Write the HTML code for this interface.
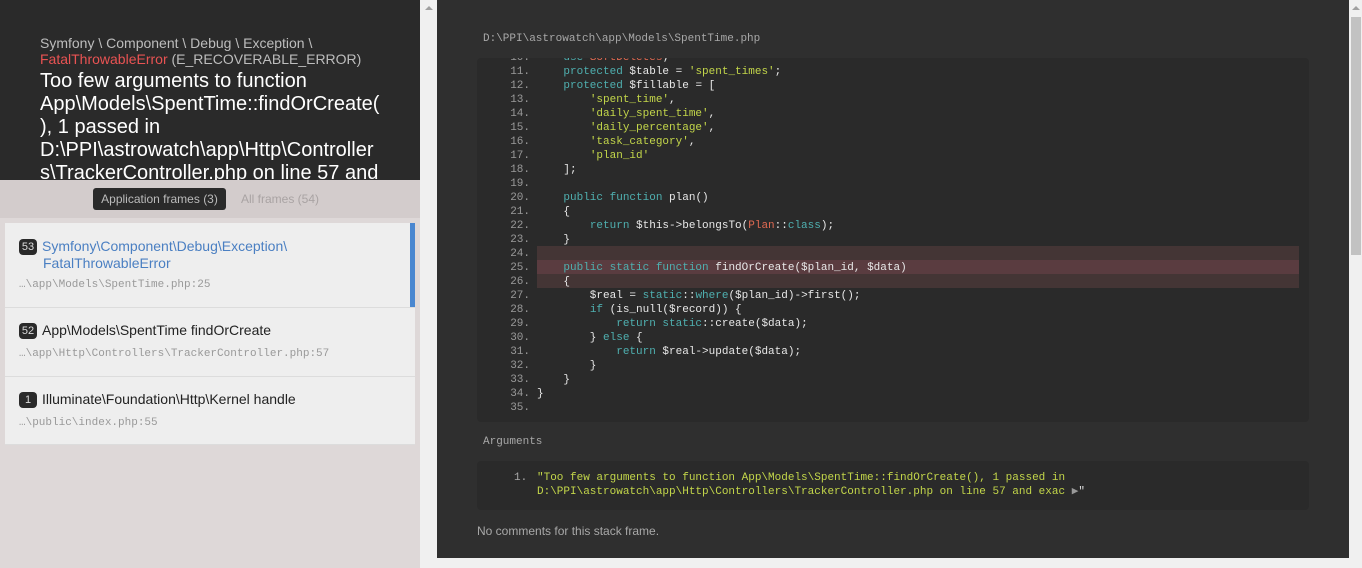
<!DOCTYPE html>
<html><head><meta charset="utf-8"><style>
*{margin:0;padding:0;box-sizing:border-box}
body{width:1362px;height:568px;overflow:hidden;background:#f0f0f0;font-family:"Liberation Sans",Arial,sans-serif;position:relative}
.abs{position:absolute}
#left{left:0;top:0;width:420px;height:568px;background:#ded8d8}
#hdr{left:0;top:0;width:420px;height:180px;background:#2a2a2a;overflow:hidden}
.cls{left:40px;top:35px;font-size:14px;line-height:16px;color:#bdbdbd;width:360px}
.msg{left:40px;top:70px;font-size:20px;line-height:23px;color:#fff;width:370px;white-space:nowrap}
#tabs{left:0;top:180px;width:420px;height:38px;background:#d3cccc}
.tab1{left:93px;top:188px;width:133px;height:22px;background:#2a2a2a;color:#bbb;border-radius:3px;font-size:12px;line-height:22px;text-align:center}
.tab2{left:241px;top:188px;font-size:12px;line-height:22px;color:#a9a3a3}
.fr{left:5px;width:410px;background:#eeeeee;border-bottom:1px solid #dcdcdc}
.badge{display:inline-block;background:#2a2a2a;color:#ddd;font-size:11px;border-radius:4px;min-width:18px;height:16px;line-height:16px;text-align:center;padding:0 2px;vertical-align:1px;margin-right:5px}
.ft{position:absolute;left:14px;font-size:14px;line-height:16px;color:#222}
.fp{position:absolute;left:14px;font-family:"Liberation Mono",monospace;font-size:11px;color:#999}
#sb1{left:420px;top:0;width:17px;height:568px;background:#f0f0f0}
#right{left:437px;top:0;width:912px;height:558px;background:#2f2f2f}
#sb2{left:1349px;top:0;width:13px;height:568px;background:#f0f0f0}
.fname{left:483px;top:33px;font-family:"Liberation Mono",monospace;font-size:11px;color:#a8a8a8}
#code{left:477px;top:58px;width:832px;height:364px;background:#2a2a2a;border-radius:4px;overflow:hidden}
.ln{position:absolute;left:0;width:53px;text-align:right;font-family:"Liberation Mono",monospace;font-size:11px;line-height:14px;color:#9a9a9a}
.cd{position:absolute;left:60px;font-family:"Liberation Mono",monospace;font-size:11px;line-height:14px;color:#e8e8e8;white-space:pre}
.k{color:#4fb0b0}.s{color:#c3d64a}.r{color:#e06a52}
.hl{position:absolute;left:60px;width:762px;height:14px}
.args{left:477px;top:461px;width:832px;height:49px;background:#2a2a2a;border-radius:4px}
.at{position:absolute;font-family:"Liberation Mono",monospace;font-size:11px;line-height:14px;color:#c3d64a;white-space:pre}
</style></head><body>
<div id="left" class="abs"></div>
<div id="hdr" class="abs">
<div class="abs cls">Symfony \ Component \ Debug \ Exception \<br><span style="color:#e95353">FatalThrowableError</span> (E_RECOVERABLE_ERROR)</div>
<div class="abs msg">Too few arguments to function<br>App\Models\SpentTime::findOrCreate(<br>), 1 passed in<br>D:\PPI\astrowatch\app\Http\Controller<br>s\TrackerController.php on line 57 and</div>
</div>
<div id="tabs" class="abs"></div>
<div class="abs tab1">Application frames (3)</div>
<div class="abs tab2">All frames (54)</div>
<div class="abs fr" style="top:223px;height:85px">
<div class="ft" style="top:15px;color:#4a7fc2"><span class="badge" style="color:#ddd">53</span>Symfony\Component\Debug\Exception\<br><span style="padding-left:24px">FatalThrowableError</span></div>
<div class="fp" style="top:56px">…\app\Models\SpentTime.php:25</div>
<div style="position:absolute;right:0;top:0;width:5px;height:84px;background:#4a87d0"></div>
</div>
<div class="abs fr" style="top:308px;height:69px">
<div class="ft" style="top:14px"><span class="badge">52</span>App\Models\SpentTime findOrCreate</div>
<div class="fp" style="top:40px">…\app\Http\Controllers\TrackerController.php:57</div>
</div>
<div class="abs fr" style="top:377px;height:68px">
<div class="ft" style="top:14px"><span class="badge">1</span>Illuminate\Foundation\Http\Kernel handle</div>
<div class="fp" style="top:40px">…\public\index.php:55</div>
</div>
<div id="sb1" class="abs"><div style="position:absolute;left:5px;top:6px;width:0;height:0;border-left:4px solid transparent;border-right:4px solid transparent;border-bottom:4px solid #a0a0a0"></div></div>
<div id="right" class="abs"></div>
<div id="sb2" class="abs"><div style="position:absolute;left:3px;top:6px;border-left:4px solid transparent;border-right:4px solid transparent;border-bottom:4px solid #a0a0a0"></div><div style="position:absolute;left:2px;top:17px;width:10px;height:238px;background:#c2c2c2"></div></div>
<div class="abs fname">D:\PPI\astrowatch\app\Models\SpentTime.php</div>
<div id="code" class="abs">
<div class="hl" style="top:188px;background:#443535"></div>
<div class="hl" style="top:202px;background:#5a3c40"></div>
<div class="hl" style="top:216px;background:#443535"></div>
<div class="ln" style="top:-7px">10.</div><div class="cd" style="top:-7px">    <span class="k">use</span> <span class="r">SoftDeletes</span>;</div>
<div class="ln" style="top:7px">11.</div><div class="cd" style="top:7px">    <span class="k">protected</span> $table = <span class="s">'spent_times'</span>;</div>
<div class="ln" style="top:21px">12.</div><div class="cd" style="top:21px">    <span class="k">protected</span> $fillable = [</div>
<div class="ln" style="top:35px">13.</div><div class="cd" style="top:35px">        <span class="s">'spent_time'</span>,</div>
<div class="ln" style="top:49px">14.</div><div class="cd" style="top:49px">        <span class="s">'daily_spent_time'</span>,</div>
<div class="ln" style="top:63px">15.</div><div class="cd" style="top:63px">        <span class="s">'daily_percentage'</span>,</div>
<div class="ln" style="top:77px">16.</div><div class="cd" style="top:77px">        <span class="s">'task_category'</span>,</div>
<div class="ln" style="top:91px">17.</div><div class="cd" style="top:91px">        <span class="s">'plan_id'</span></div>
<div class="ln" style="top:105px">18.</div><div class="cd" style="top:105px">    ];</div>
<div class="ln" style="top:119px">19.</div>
<div class="ln" style="top:133px">20.</div><div class="cd" style="top:133px">    <span class="k">public function</span> plan()</div>
<div class="ln" style="top:147px">21.</div><div class="cd" style="top:147px">    {</div>
<div class="ln" style="top:161px">22.</div><div class="cd" style="top:161px">        <span class="k">return</span> $this-&gt;belongsTo(<span class="r">Plan</span>::<span class="k">class</span>);</div>
<div class="ln" style="top:175px">23.</div><div class="cd" style="top:175px">    }</div>
<div class="ln" style="top:189px">24.</div>
<div class="ln" style="top:203px">25.</div><div class="cd" style="top:203px">    <span class="k">public static function</span> findOrCreate($plan_id, $data)</div>
<div class="ln" style="top:217px">26.</div><div class="cd" style="top:217px">    {</div>
<div class="ln" style="top:231px">27.</div><div class="cd" style="top:231px">        $real = <span class="k">static</span>::<span class="k">where</span>($plan_id)-&gt;first();</div>
<div class="ln" style="top:245px">28.</div><div class="cd" style="top:245px">        <span class="k">if</span> (is_null($record)) {</div>
<div class="ln" style="top:259px">29.</div><div class="cd" style="top:259px">            <span class="k">return static</span>::create($data);</div>
<div class="ln" style="top:273px">30.</div><div class="cd" style="top:273px">        } <span class="k">else</span> {</div>
<div class="ln" style="top:287px">31.</div><div class="cd" style="top:287px">            <span class="k">return</span> $real-&gt;update($data);</div>
<div class="ln" style="top:301px">32.</div><div class="cd" style="top:301px">        }</div>
<div class="ln" style="top:315px">33.</div><div class="cd" style="top:315px">    }</div>
<div class="ln" style="top:329px">34.</div><div class="cd" style="top:329px">}</div>
<div class="ln" style="top:343px">35.</div>
</div>
<div class="abs" style="left:483px;top:436px;font-family:'Liberation Mono',monospace;font-size:11px;color:#a8a8a8">Arguments</div>
<div class="abs args">
<div class="at" style="left:37px;top:10px;color:#a8a8a8">1.</div>
<div class="at" style="left:60px;top:10px">"Too few arguments to function App\Models\SpentTime::findOrCreate(), 1 passed in</div>
<div class="at" style="left:60px;top:24px">D:\PPI\astrowatch\app\Http\Controllers\TrackerController.php on line 57 and exac <span style="color:#999">▶</span><span style="color:#ddd">"</span></div>
</div>
<div class="abs" style="left:477px;top:524px;font-size:12px;color:#a8a8a8">No comments for this stack frame.</div>
</body></html>
